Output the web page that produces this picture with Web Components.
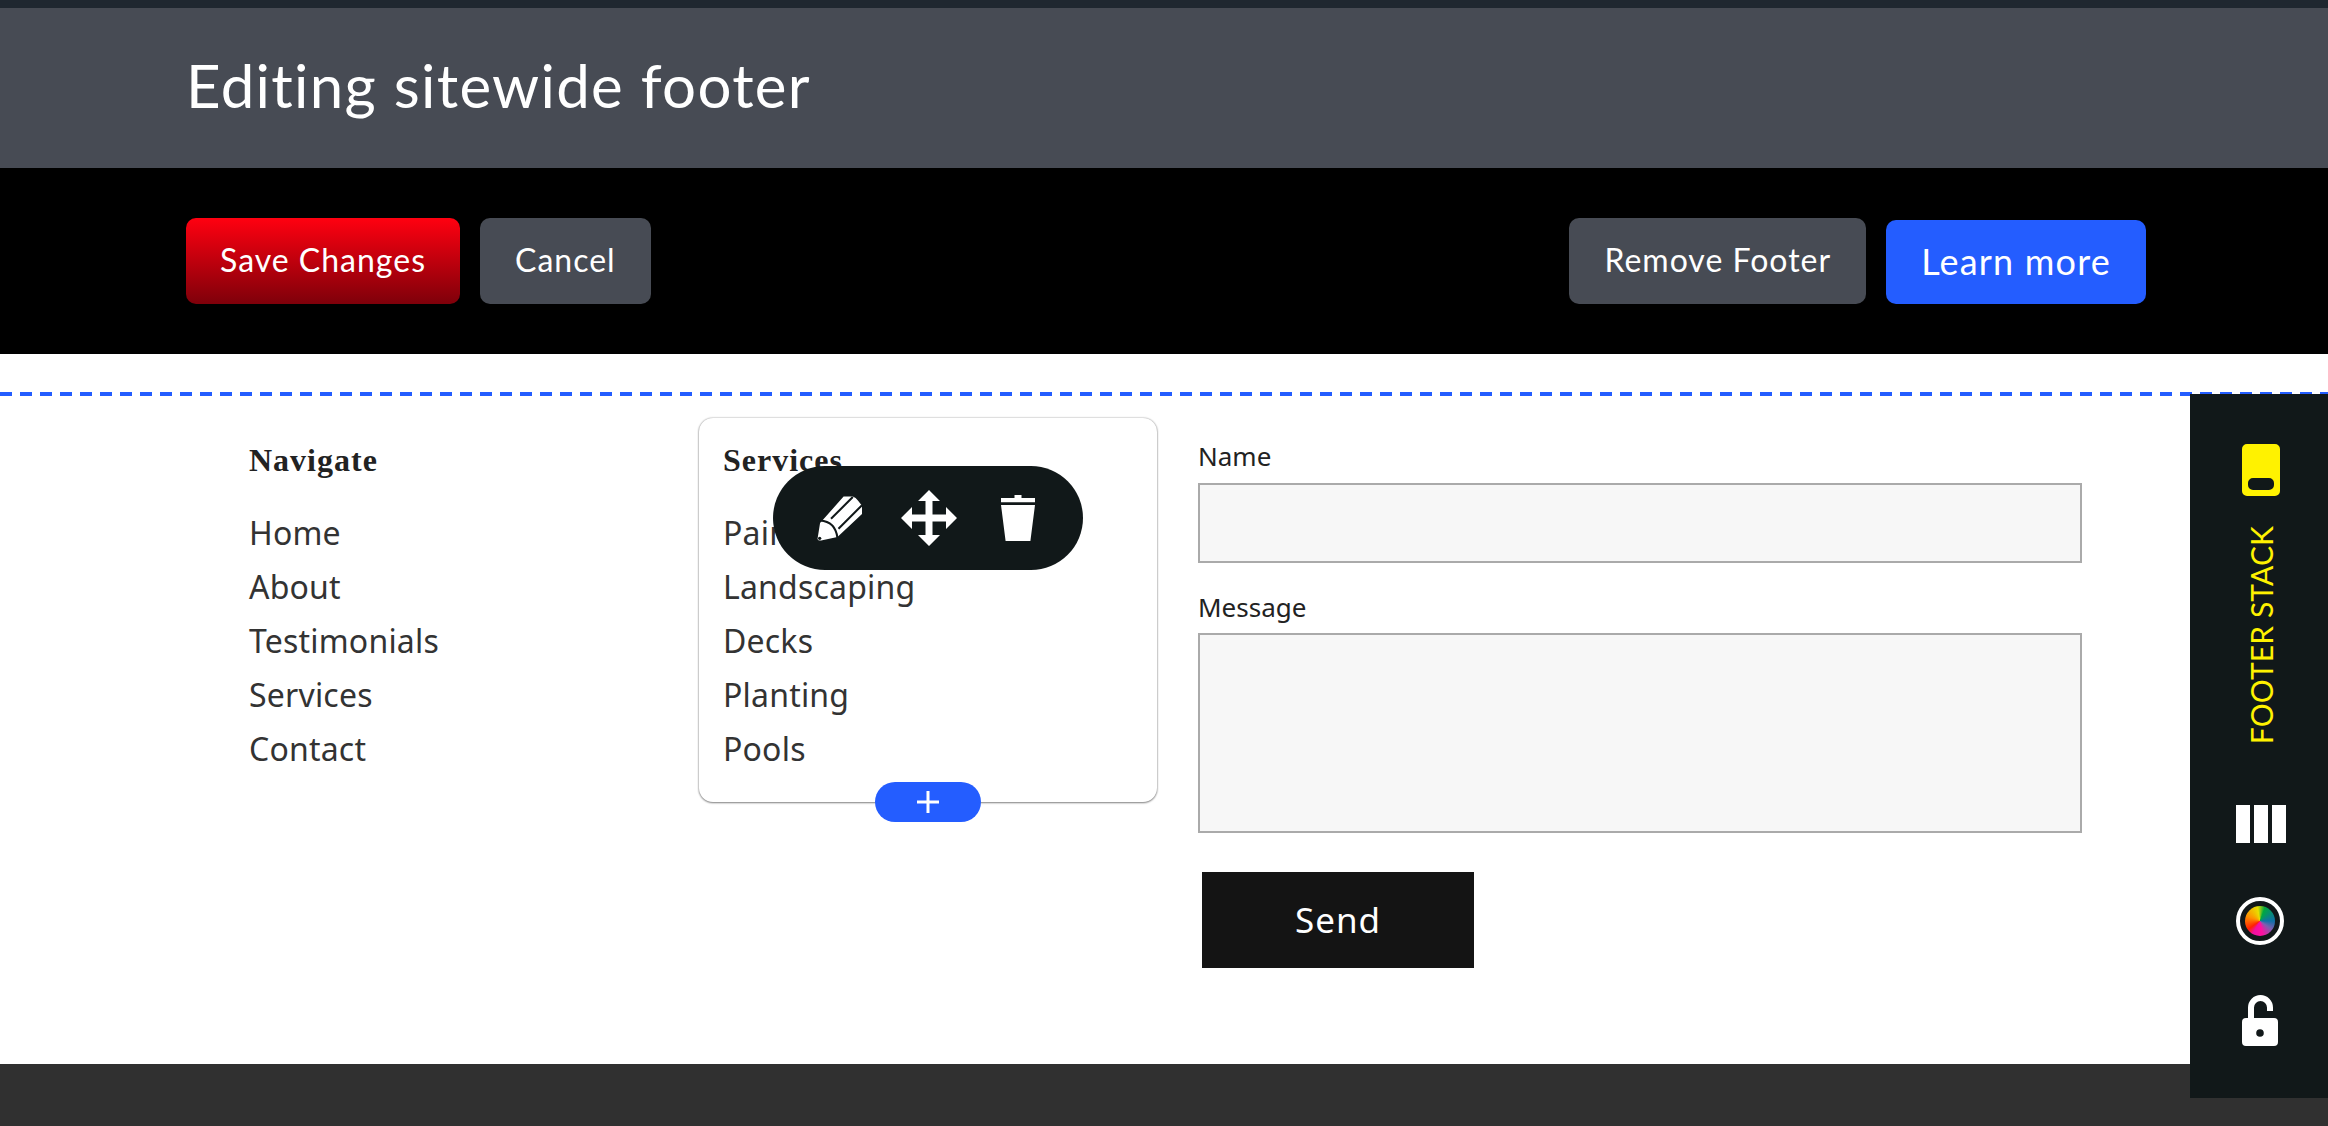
<!DOCTYPE html>
<html lang="en">
<head>
<meta charset="utf-8">
<title>Editing sitewide footer</title>
<style>
  html, body { margin: 0; height: 100%; overflow: hidden; background: #fff; }
  body { display: flex; flex-direction: column; font-family: "Noto Sans", sans-serif; }
</style>
</head>
<body>

<editor-header>Editing sitewide footer</editor-header>

<editor-toolbar>
  <editor-button slot="left" kind="save">Save Changes</editor-button>
  <editor-button slot="left" kind="grey">Cancel</editor-button>
  <editor-button slot="right" kind="grey">Remove Footer</editor-button>
  <editor-button slot="right" kind="blue">Learn more</editor-button>
</editor-toolbar>

<footer-stage>
  <footer-links heading="Navigate" items="Home,About,Testimonials,Services,Contact"></footer-links>
  <footer-links heading="Services" items="Painting,Landscaping,Decks,Planting,Pools" active></footer-links>
  <contact-form></contact-form>
  <stack-rail slot="rail"></stack-rail>
</footer-stage>

<site-footer></site-footer>

<script>
class EditorHeader extends HTMLElement {
  connectedCallback() {
    this.attachShadow({ mode: 'open' });
    this.shadowRoot.innerHTML = `
      <style>
        :host {
          display: flex;
          align-items: center;
          height: 160px;
          box-sizing: content-box;
          padding-left: 186px;
          background: #474b54;
          border-top: 8px solid #1f2730;
          color: #fff;
          font: 400 60px/1 Lato, sans-serif;
          letter-spacing: 1.3px;
        }
        div { margin-top: -6px; }
      </style>
      <div><slot></slot></div>`;
  }
}

class EditorToolbar extends HTMLElement {
  connectedCallback() {
    this.attachShadow({ mode: 'open' });
    this.shadowRoot.innerHTML = `
      <style>
        :host {
          display: flex;
          justify-content: space-between;
          align-items: flex-end;
          height: 186px;
          box-sizing: border-box;
          padding: 0 182px 50px 186px;
          background: #000;
        }
        div { display: flex; align-items: flex-end; gap: 20px; }
      </style>
      <div><slot name="left"></slot></div>
      <div><slot name="right"></slot></div>`;
  }
}

class EditorButton extends HTMLElement {
  connectedCallback() {
    this.attachShadow({ mode: 'open' });
    this.shadowRoot.innerHTML = `
      <style>
        :host {
          display: flex;
          align-items: center;
          height: 86px;
          box-sizing: border-box;
          padding: 0 35px 2px;
          border-radius: 10px;
          color: #fff;
          font: 400 32px/1 Lato, sans-serif;
          letter-spacing: 1px;
          background: #474b54;
        }
        :host([kind="save"]) {
          padding: 0 34px 2px;
          background: linear-gradient(#ff0010, #7e000a);
        }
        :host([kind="blue"]) {
          height: 84px;
          background: #245dff;
          font-size: 36px;
          letter-spacing: 1.2px;
          padding: 0 35px 2px;
        }
      </style>
      <slot></slot>`;
  }
}

class FooterStage extends HTMLElement {
  connectedCallback() {
    this.attachShadow({ mode: 'open' });
    this.shadowRoot.innerHTML = `
      <style>
        :host {
          display: block;
          position: relative;
          height: 710px;
          box-sizing: border-box;
          padding-top: 38px;
        }
        .edge {
          display: flex;
          align-items: flex-start;
          height: 100%;
          box-sizing: border-box;
          padding: 26px 0 0 249px;
          background: repeating-linear-gradient(90deg, #245dff 0 12px, transparent 12px 20px) top left / 100% 4px no-repeat;
        }
      </style>
      <div class="edge"><slot></slot></div>
      <slot name="rail"></slot>`;
  }
}

class FooterLinks extends HTMLElement {
  connectedCallback() {
    const items = this.getAttribute('items').split(',');
    this.attachShadow({ mode: 'open' });
    this.shadowRoot.innerHTML = `
      <style>
        :host {
          display: block;
          position: relative;
          box-sizing: border-box;
          width: 450px;
          height: 384px;
          padding-top: 22px;
          color: #333;
        }
        :host([active]) {
          width: 458px;
          padding-left: 24px;
          border-radius: 14px;
          background: #fff;
          box-shadow: 0 1px 2px #888, 0 0 2px #999;
        }
        h3 {
          margin: 0 0 26px;
          color: #222;
          font: 700 32px/40px "Liberation Serif", serif;
          letter-spacing: 1px;
        }
        ul { list-style: none; margin: 0; padding: 0; }
        li { font: 400 32px/54px "Noto Sans", sans-serif; letter-spacing: 0.2px; }
        .tools {
          position: absolute;
          left: 74px;
          top: 48px;
          display: flex;
          align-items: center;
          box-sizing: border-box;
          padding-left: 44px;
          width: 310px;
          height: 104px;
          border-radius: 52px;
          background: #111819;
        }
        .pencil { margin-right: 39px; }
        .trash { margin-left: 44px; }
        .add {
          position: absolute;
          left: 176px;
          top: 364px;
          display: flex;
          align-items: center;
          justify-content: center;
          width: 106px;
          height: 40px;
          border-radius: 20px;
          background: #245dff;
        }
        svg { display: block; }
      </style>
      <h3>${this.getAttribute('heading')}</h3>
      <ul>${items.map(i => `<li>${i}</li>`).join('')}</ul>
      ${this.hasAttribute('active') ? `
      <div class="tools">
        <svg class="pencil" width="45" height="45" viewBox="0 0 44 44">
          <path fill="#fff" d="M26 .5h9q3 1 5 4l4 5v8L20 40 4 43.500Q1 44 .5 42L3 26.500Z"/>
          <path fill="none" stroke="#111819" stroke-width="2" d="M35 1 13.700 22.300M44 9 21 32M3 24Q18 25 20 41"/>
          <circle cx="2.600" cy="41.400" r="1.600" fill="#111819"/>
        </svg>
        <svg width="56" height="56" viewBox="0 0 56 56">
          <path fill="#fff" d="M28 0 39 11H31.500V24.500H45V17L56 28 45 39V31.500H31.500V45H39L28 56 17 45H24.500V31.500H11V39L0 28 11 17V24.500H24.500V11H17Z"/>
        </svg>
        <svg class="trash" width="34" height="46" viewBox="0 0 34 46">
          <path fill="#fff" d="M13.500 0H20.500V3H34V7.300H0V3H13.500ZM0 10H34L29.400 46H4.600Z"/>
        </svg>
      </div>
      <div class="add">
        <svg width="22" height="22" viewBox="0 0 22 22"><path stroke="#fff" stroke-width="3" d="M11 0V22M0 11H22"/></svg>
      </div>` : ''}`;
  }
}

class ContactForm extends HTMLElement {
  connectedCallback() {
    this.attachShadow({ mode: 'open' });
    this.shadowRoot.innerHTML = `
      <style>
        :host {
          display: block;
          width: 884px;
          margin-left: 41px;
          padding-top: 20px;
          color: #222;
          font: 400 26px/36px "Noto Sans", sans-serif;
        }
        label { display: block; height: 45px; }
        .field { box-sizing: border-box; border: 2px solid #aaa; background: #f7f7f7; }
        .name { height: 80px; margin-bottom: 26px; }
        .msg { height: 200px; }
        .name + label { height: 44px; }
        .send {
          display: flex;
          align-items: center;
          justify-content: center;
          width: 272px;
          height: 96px;
          margin: 39px 0 0 4px;
          background: #141414;
          color: #fff;
          font-size: 35px;
          letter-spacing: 1px;
        }
      </style>
      <label>Name</label>
      <div class="field name"></div>
      <label>Message</label>
      <div class="field msg"></div>
      <div class="send">Send</div>`;
  }
}

class StackRail extends HTMLElement {
  connectedCallback() {
    this.attachShadow({ mode: 'open' });
    this.shadowRoot.innerHTML = `
      <style>
        :host {
          position: absolute;
          top: 40px;
          right: 0;
          display: flex;
          flex-direction: column;
          align-items: center;
          width: 138px;
          height: 704px;
          box-sizing: border-box;
          padding: 50px 0 0 4px;
          background: #111819;
        }
        .label {
          writing-mode: vertical-rl;
          transform: rotate(180deg);
          margin-top: 30px;
          color: #fff200;
          font: 400 30px/34px Lato, sans-serif;
          letter-spacing: 0.1px;
        }
        svg { display: block; }
        .cols { margin-top: 61px; }
        .wheel-wrap {
          box-sizing: border-box;
          width: 48px;
          height: 48px;
          margin: 54px 2px 0 0;
          padding: 5px;
          border: 4px solid #fff;
          border-radius: 50%;
        }
        .wheel {
          width: 100%;
          height: 100%;
          border-radius: 50%;
          background: conic-gradient(from 20deg, #00a840 0deg, #1070a8 70deg, #7a60b0 105deg, #ff10a0 150deg, #f010a0 190deg, #ff2000 215deg, #ff9000 270deg, #e8e000 330deg, #00a840 360deg);
        }
        .lock { margin: 50px 2px 0 0; }
      </style>
      <svg width="38" height="52" viewBox="0 0 38 52">
        <path fill="#fff200" fill-rule="evenodd" d="M5 0H33a5 5 0 0 1 5 5V47a5 5 0 0 1-5 5H5a5 5 0 0 1-5-5V5a5 5 0 0 1 5-5ZM11 34a5 5 0 0 0-5 5v2a5 5 0 0 0 5 5H27a5 5 0 0 0 5-5v-2a5 5 0 0 0-5-5Z"/>
      </svg>
      <div class="label">FOOTER STACK</div>
      <svg class="cols" width="50" height="38" viewBox="0 0 50 38">
        <path fill="#fff" d="M0 0H14V38H0ZM18 0H32V38H18ZM36 0H50V38H36Z"/>
      </svg>
      <div class="wheel-wrap"><div class="wheel"></div></div>
      <svg class="lock" width="36" height="51" viewBox="0 0 36 51">
        <path fill="none" stroke="#fff" stroke-width="6" d="M9 25V12.500a9.500 9.500 0 0 1 19 0V16"/>
        <path fill="#fff" fill-rule="evenodd" d="M4 23H32a4 4 0 0 1 4 4V47a4 4 0 0 1-4 4H4a4 4 0 0 1-4-4V27a4 4 0 0 1 4-4ZM18 34.200a3.800 3.800 0 1 0 0 7.600 3.800 3.800 0 0 0 0-7.600Z"/>
      </svg>`;
  }
}

class SiteFooter extends HTMLElement {
  connectedCallback() {
    this.attachShadow({ mode: 'open' });
    this.shadowRoot.innerHTML = `<style>:host { display: block; flex: 1; background: #303030; }</style>`;
  }
}

customElements.define('editor-header', EditorHeader);
customElements.define('editor-toolbar', EditorToolbar);
customElements.define('editor-button', EditorButton);
customElements.define('footer-stage', FooterStage);
customElements.define('footer-links', FooterLinks);
customElements.define('contact-form', ContactForm);
customElements.define('stack-rail', StackRail);
customElements.define('site-footer', SiteFooter);
</script>
</body>
</html>
